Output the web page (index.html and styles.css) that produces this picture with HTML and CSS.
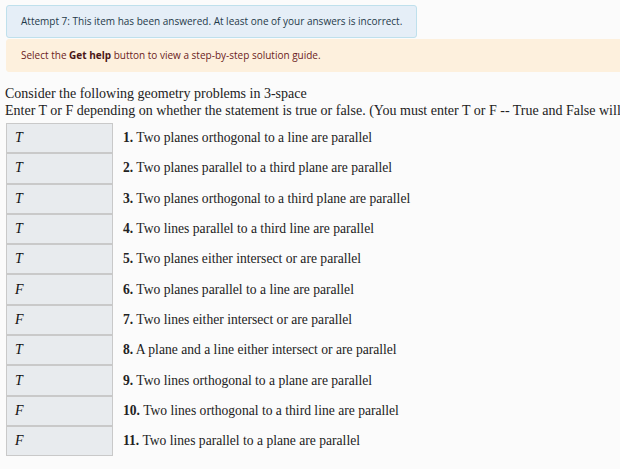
FILE: index.html
```html
<!DOCTYPE html>
<html>
<head>
<meta charset="utf-8">
<link rel="stylesheet" href="styles.css">
</head>
<body>
<div class="page">
  <div class="alert alert-info">Attempt 7: This item has been answered. At least one of your answers is incorrect.</div>
  <div class="alert alert-warn">Select the <b>Get help</b> button to view a step-by-step solution guide.</div>
  <div class="problem">
    <p class="intro">Consider the following geometry problems in 3-space<br>Enter T or F depending on whether the statement is true or false. (You must enter T or F -- True and False will not work.)</p>
    <div class="rows">
      <div class="row"><div class="answer">T</div><div class="label"><b>1.</b> Two planes orthogonal to a line are parallel</div></div>
      <div class="row"><div class="answer">T</div><div class="label"><b>2.</b> Two planes parallel to a third plane are parallel</div></div>
      <div class="row"><div class="answer">T</div><div class="label"><b>3.</b> Two planes orthogonal to a third plane are parallel</div></div>
      <div class="row"><div class="answer">T</div><div class="label"><b>4.</b> Two lines parallel to a third line are parallel</div></div>
      <div class="row"><div class="answer">T</div><div class="label"><b>5.</b> Two planes either intersect or are parallel</div></div>
      <div class="row"><div class="answer">F</div><div class="label"><b>6.</b> Two planes parallel to a line are parallel</div></div>
      <div class="row"><div class="answer">F</div><div class="label"><b>7.</b> Two lines either intersect or are parallel</div></div>
      <div class="row"><div class="answer">T</div><div class="label"><b>8.</b> A plane and a line either intersect or are parallel</div></div>
      <div class="row"><div class="answer">T</div><div class="label"><b>9.</b> Two lines orthogonal to a plane are parallel</div></div>
      <div class="row"><div class="answer">F</div><div class="label"><b>10.</b> Two lines orthogonal to a third line are parallel</div></div>
      <div class="row"><div class="answer">F</div><div class="label"><b>11.</b> Two lines parallel to a plane are parallel</div></div>
    </div>
  </div>
</div>
</body>
</html>
```

FILE: styles.css
```css
html, body {
  margin: 0;
  padding: 0;
  background: #fbfbfb;
  overflow: hidden;
}
.page {
  width: 620px;
  height: 469px;
  overflow: hidden;
  padding: 5px 0 0 6px;
  box-sizing: border-box;
}
.alert {
  font-family: "Open Sans", "DejaVu Sans", sans-serif;
  font-size: 10px;
  box-sizing: border-box;
  height: 33px;
  line-height: 31px;
  padding: 0 14px;
  border-radius: 3px;
  white-space: nowrap;
}
.alert-info {
  width: 411px;
  background: #e5eef7;
  border: 1px solid #bfe0ec;
  color: #1f3a4a;
}
.alert-warn {
  width: 640px;
  margin-top: 1px;
  background: #fdf0dd;
  border: 1px solid #fdf0dd;
  color: #6b2222;
}
.alert-warn b { color: #4a1616; }
.problem {
  font-family: "Liberation Serif", serif;
  color: #222;
  margin-left: -1px;
}
.intro {
  margin: 13px 0 0 0;
  font-size: 14px;
  line-height: 17px;
  white-space: nowrap;
}
.rows {
  margin-top: 4px;
  margin-left: 1px;
}
.row {
  display: flex;
  align-items: center;
  height: 30.3px;
}
.answer {
  box-sizing: border-box;
  width: 107px;
  height: 100%;
  background: #e8ebee;
  border: 1px solid #c9c9c9;
  font-style: italic;
  font-size: 14px;
  padding-left: 8px;
  display: flex;
  align-items: center;
  color: #111;
}
.label {
  margin-left: 10px;
  font-size: 13.6px;
  color: #222;
}
```
